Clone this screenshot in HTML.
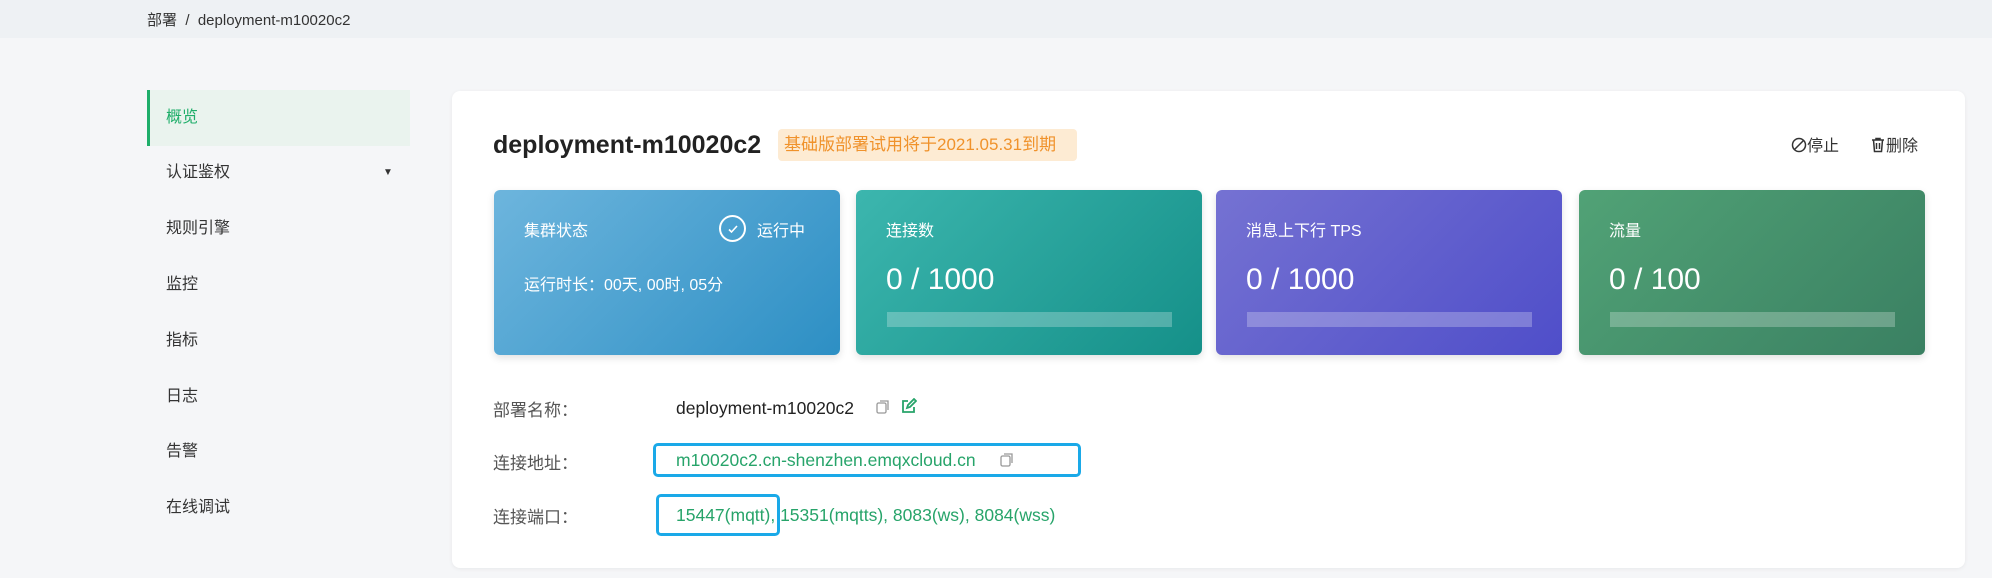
<!DOCTYPE html>
<html><head><meta charset="utf-8"><style>
*{margin:0;padding:0;box-sizing:border-box}
body{width:1992px;height:578px;background:#f5f6f8;font-family:"Liberation Sans","Noto Sans CJK SC",sans-serif;position:relative;overflow:hidden;color:#333}
.abs{position:absolute}
.top{left:0;top:0;width:1992px;height:38px;background:#eef1f4}
.crumb{left:147px;top:9px;font-size:15px;color:#333}
.side{left:147px;width:263px;height:56px;font-size:16px;color:#333;line-height:56px;padding-left:19px}
.act{background:#eaf3ee;border-left:3px solid #1fae6a;color:#1fae6a;padding-left:16px}
.card{left:452px;top:91px;width:1513px;height:477px;background:#fff;border-radius:8px;box-shadow:0 1px 4px rgba(0,0,0,.06)}
.st{top:190px;width:346px;height:165px;border-radius:6px;color:#fff;box-shadow:0 3px 8px rgba(0,0,0,.12)}
.st .t{position:absolute;left:30px;top:27px;font-size:16px}
.st .v{position:absolute;left:30px;top:73px;font-size:30px}
.st .b{position:absolute;left:31px;right:30px;top:122px;height:15px;background:rgba(255,255,255,.25)}
.lab{left:493px;font-size:17px;color:#555}
.val{left:676px;font-size:17.5px}
.g{color:#27a46a}
.box{border:3px solid #1aa9e8;border-radius:5px}
</style></head><body>
<div class="abs top"></div>
<div class="abs crumb">部署 &nbsp;/&nbsp; deployment-m10020c2</div>
<div class="abs side act" style="top:90px">概览</div>
<div class="abs side" style="top:145px">认证鉴权<span style="position:absolute;left:236px;top:0;font-size:10px">▼</span></div>
<div class="abs side" style="top:201px">规则引擎</div>
<div class="abs side" style="top:257px">监控</div>
<div class="abs side" style="top:313px">指标</div>
<div class="abs side" style="top:369px">日志</div>
<div class="abs side" style="top:424px">告警</div>
<div class="abs side" style="top:480px">在线调试</div>
<div class="abs card"></div>
<div class="abs" style="left:493px;top:131px;font-size:25px;font-weight:bold;color:#222">deployment-m10020c2</div>
<div class="abs" style="left:778px;top:129px;width:299px;height:32px;background:#fdebd3;border-radius:4px;color:#f0922b;font-size:17px;line-height:32px;padding-left:6px;white-space:nowrap">基础版部署试用将于2021.05.31到期</div>
<div class="abs" style="left:1791px;top:132px;font-size:16px;color:#333"><svg width="16" height="16" viewBox="0 0 16 16" style="vertical-align:-2px"><circle cx="8" cy="8" r="6.5" fill="none" stroke="#333" stroke-width="1.5"/><line x1="3.5" y1="12.5" x2="12.5" y2="3.5" stroke="#333" stroke-width="1.5"/></svg>停止</div>
<div class="abs" style="left:1870px;top:132px;font-size:16px;color:#333"><svg width="16" height="16" viewBox="0 0 16 16" style="vertical-align:-2px"><path d="M2 3h12M6 3V1.5h4V3M3.5 3l1 11.5h7l1-11.5M6.5 6v6M9.5 6v6" fill="none" stroke="#333" stroke-width="1.5"/></svg>删除</div>

<div class="abs st" style="left:494px;background:linear-gradient(135deg,#6db5dd,#2d8fc4)">
<div class="t">集群状态</div>
<div style="position:absolute;left:225px;top:25px;width:27px;height:27px;border:2px solid #fff;border-radius:50%"></div>
<svg class="abs" style="left:232px;top:32px" width="14" height="14" viewBox="0 0 14 14"><path d="M3 7.5l2.5 2.5L11 4" fill="none" stroke="#fff" stroke-width="1.6"/></svg>
<div style="position:absolute;left:263px;top:27px;font-size:16px">运行中</div>
<div style="position:absolute;left:30px;top:81px;font-size:16px">运行时长：00天, 00时, 05分</div>
</div>
<div class="abs st" style="left:856px;background:linear-gradient(135deg,#3cb6ae,#159089)"><div class="t">连接数</div><div class="v">0 / 1000</div><div class="b"></div></div>
<div class="abs st" style="left:1216px;background:linear-gradient(135deg,#7572d2,#4f4ec9)"><div class="t">消息上下行 TPS</div><div class="v">0 / 1000</div><div class="b"></div></div>
<div class="abs st" style="left:1579px;background:linear-gradient(135deg,#51a276,#3a8062)"><div class="t">流量</div><div class="v">0 / 100</div><div class="b"></div></div>

<div class="abs lab" style="top:396px">部署名称：</div>
<div class="abs val" style="top:398px;color:#222">deployment-m10020c2</div>
<svg class="abs" style="left:875px;top:399px" width="16" height="16" viewBox="0 0 16 16"><rect x="2" y="4" width="9" height="10" rx="1.5" fill="none" stroke="#999" stroke-width="1.3"/><path d="M5 2h8v9" fill="none" stroke="#999" stroke-width="1.3"/></svg>
<svg class="abs" style="left:900px;top:398px" width="17" height="17" viewBox="0 0 17 17"><path d="M8 3H3v11h11V9" fill="none" stroke="#27a46a" stroke-width="1.8"/><path d="M7 10l1-3 6-6 2 2-6 6z" fill="none" stroke="#27a46a" stroke-width="1.8"/></svg>
<div class="abs lab" style="top:449px">连接地址：</div>
<div class="abs box" style="left:653px;top:443px;width:428px;height:34px"></div>
<div class="abs val g" style="top:450px">m10020c2.cn-shenzhen.emqxcloud.cn</div>
<svg class="abs" style="left:999px;top:452px" width="16" height="16" viewBox="0 0 16 16"><rect x="2" y="4" width="9" height="10" rx="1.5" fill="none" stroke="#999" stroke-width="1.3"/><path d="M5 2h8v9" fill="none" stroke="#999" stroke-width="1.3"/></svg>
<div class="abs lab" style="top:503px">连接端口：</div>
<div class="abs box" style="left:656px;top:494px;width:124px;height:42px"></div>
<div class="abs val g" style="top:505px">15447(mqtt), 15351(mqtts), 8083(ws), 8084(wss)</div>
</body></html>
